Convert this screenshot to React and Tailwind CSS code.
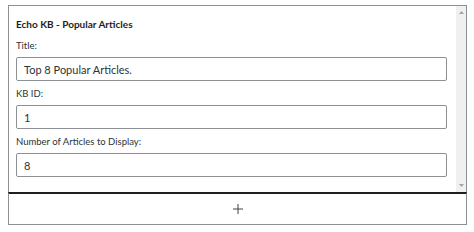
import React from 'react';

const Field = ({ label, value }) => (
  <div className="mt-[4px]">
    <label className="block text-[9.5px] leading-[18px] text-[#2c3338]">{label}</label>
    <input
      readOnly
      value={value}
      className="mt-[2px] block w-full h-[24px] px-[7px] text-[11px] text-[#2c3338] bg-white border border-[#8c8f94] rounded-[2px] outline-none"
    />
  </div>
);

export default function App() {
  return (
    <div className="w-[474px] h-[232px] bg-white pt-[5px] pl-[8px] font-['Segoe_UI','Lato',sans-serif]">
      <div className="w-[459px]">
        {/* widget panel */}
        <div className="flex h-[187px] border border-b-0 border-[#8c8f94]">
          <div className="flex-1 pl-[7px] pr-[9px] pt-[9px]">
            <h3 className="text-[10px] leading-[18px] font-bold text-[#1e1e1e]">Echo KB - Popular Articles</h3>
            <Field label="Title:" value="Top 8 Popular Articles." />
            <Field label="KB ID:" value="1" />
            <Field label="Number of Articles to Display:" value="8" />
          </div>
          {/* scrollbar */}
          <div className="w-[10px] bg-[#f0f0f0] flex flex-col justify-between items-center py-[5px]">
            <svg width="5" height="3" viewBox="0 0 5 3"><path d="M0 3L2.5 0L5 3Z" fill="#a3a3a3" /></svg>
            <svg width="5" height="3" viewBox="0 0 5 3"><path d="M0 0L2.5 3L5 0Z" fill="#a3a3a3" /></svg>
          </div>
        </div>
        {/* add block */}
        <div className="h-[33px] border-t-2 border-[#1e1e1e] border-x border-b border-x-[#8c8f94] border-b-[#8c8f94] flex items-center justify-center">
          <svg width="10" height="10" viewBox="0 0 10 10">
            <path d="M5 0V10M0 5H10" stroke="#3c434a" strokeWidth="1" />
          </svg>
        </div>
      </div>
    </div>
  );
}
